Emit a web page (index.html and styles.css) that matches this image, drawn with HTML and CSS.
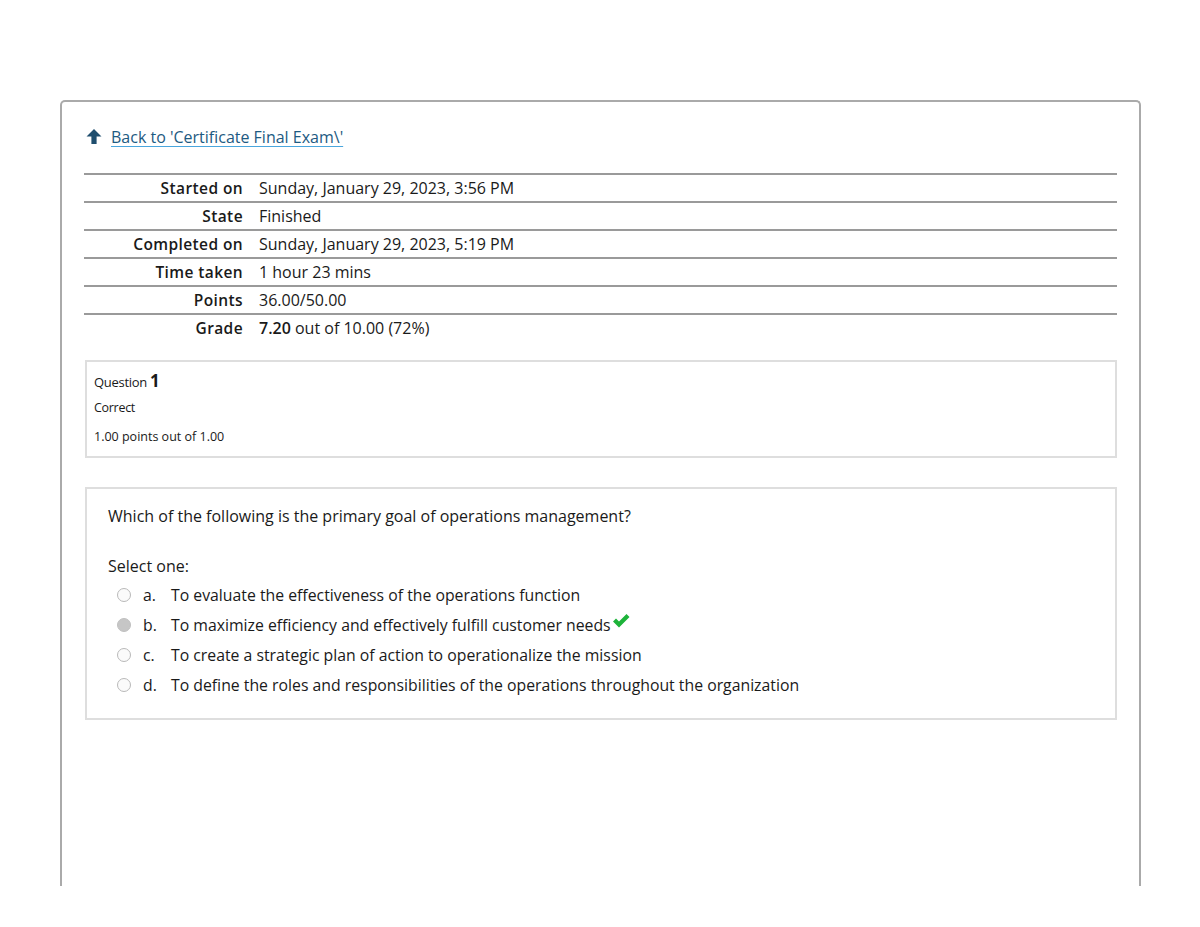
FILE: index.html
```html
<!DOCTYPE html>
<html>
<head>
<meta charset="utf-8">
<link rel="stylesheet" href="styles.css">
</head>
<body>
<div class="page">
  <div class="back">
    <svg class="arrow" width="16" height="15" viewBox="0 0 16 15"><path d="M8 0 L15.5 7.5 L10.6 7.5 L10.6 15 L5.4 15 L5.4 7.5 L0.5 7.5 Z" fill="#1f4e6e"/></svg>
    <a class="back-link" href="#">Back to 'Certificate Final Exam\'</a>
  </div>
  <div class="summary">
    <div class="row"><div class="lbl">Started on</div><div class="val">Sunday, January 29, 2023, 3:56 PM</div></div>
    <div class="row"><div class="lbl">State</div><div class="val">Finished</div></div>
    <div class="row"><div class="lbl">Completed on</div><div class="val">Sunday, January 29, 2023, 5:19 PM</div></div>
    <div class="row"><div class="lbl">Time taken</div><div class="val">1 hour 23 mins</div></div>
    <div class="row"><div class="lbl">Points</div><div class="val">36.00/50.00</div></div>
    <div class="row last"><div class="lbl">Grade</div><div class="val"><b>7.20</b> out of 10.00 (72%)</div></div>
  </div>
  <div class="qinfo">
    <div class="qno">Question <span class="num">1</span></div>
    <div class="qstate">Correct</div>
    <div class="qgrade">1.00 points out of 1.00</div>
  </div>
  <div class="qbox">
    <div class="qtext">Which of the following is the primary goal of operations management?</div>
    <div class="prompt">Select one:</div>
    <div class="answers">
      <div class="opt"><span class="radio"></span><span class="letter">a.</span><span class="otext">To evaluate the effectiveness of the operations function</span></div>
      <div class="opt"><span class="radio on"></span><span class="letter">b.</span><span class="otext">To maximize efficiency and effectively fulfill customer needs</span><svg class="check" width="18" height="16" viewBox="0 0 18 16"><path d="M1 8.5 L4 5.5 L7 8.5 L14.5 1 L17.5 4 L7 14.5 Z" fill="#1db33a"/></svg></div>
      <div class="opt"><span class="radio"></span><span class="letter">c.</span><span class="otext">To create a strategic plan of action to operationalize the mission</span></div>
      <div class="opt"><span class="radio"></span><span class="letter">d.</span><span class="otext">To define the roles and responsibilities of the operations throughout the organization</span></div>
    </div>
  </div>
</div>
</body>
</html>
```

FILE: styles.css
```css
body {
  margin: 0;
  background: #fff;
  font-family: "Open Sans", "Noto Sans", sans-serif;
  color: #1a1a1a;
}
.page {
  margin: 100px 0 0 60px;
  height: 784px;
  border: 2px solid #aaa;
  border-bottom: none;
  border-radius: 5px 5px 0 0;
  padding: 0 22px;
  box-sizing: content-box;
  width: 1033px;
}
.back {
  display: flex;
  align-items: center;
  margin-top: 24px;
  height: 22px;
  margin-left: 2px;
}
.arrow {
  display: block;
  margin-right: 9px;
  margin-top: -1px;
}
.back-link {
  font-size: 16px;
  color: #1d5a82;
  text-decoration: underline;
  text-decoration-color: #4aa6dd;
  text-underline-offset: 3px;
}
.summary {
  margin-top: 25px;
}
.row {
  display: flex;
  align-items: center;
  height: 26px;
  border-top: 2px solid #9a9a9a;
  font-size: 16px;
}
.lbl {
  width: 175px;
  text-align: right;
  font-weight: 600;
  font-size: 15.5px;
  letter-spacing: 0.4px;
  padding-right: 16px;
  box-sizing: border-box;
}
.val {
  color: #1a1a1a;
}
.val b { font-weight: 600; }
.qinfo {
  margin-top: 19px;
  margin-left: 1px;
  height: 94px;
  border: 2px solid #dedede;
  padding-left: 7px;
}
.qno {
  font-size: 13px;
  margin-top: 9px;
  height: 20px;
  line-height: 20px;
  letter-spacing: -0.3px;
}
.qno .num {
  font-size: 17px;
  font-weight: 700;
}
.qstate {
  font-size: 12.5px;
  margin-top: 7px;
  height: 20px;
  line-height: 20px;
  letter-spacing: -0.3px;
}
.qgrade {
  font-size: 12.5px;
  margin-top: 9px;
  height: 20px;
  line-height: 20px;
}
.qbox {
  margin-top: 29px;
  margin-left: 1px;
  height: 229px;
  border: 2px solid #dedede;
  padding-left: 21px;
}
.qtext {
  font-size: 16px;
  margin-top: 16px;
  height: 22px;
  line-height: 22px;
}
.prompt {
  font-size: 16px;
  margin-top: 28px;
  height: 22px;
  line-height: 22px;
}
.answers {
  margin-top: 3px;
}
.opt {
  display: flex;
  align-items: center;
  height: 30px;
  font-size: 15.8px;
}
.radio {
  width: 12px;
  height: 12px;
  border: 1.5px solid #b9b9b9;
  border-radius: 50%;
  background: #fbfbfb;
  margin-left: 9px;
  margin-right: 12px;
}
.radio.on {
  background: #c6c6c6;
  border-color: #c0c0c0;
}
.letter {
  width: 28px;
}
.check {
  margin-left: 1px;
  margin-top: -8px;
}
```
